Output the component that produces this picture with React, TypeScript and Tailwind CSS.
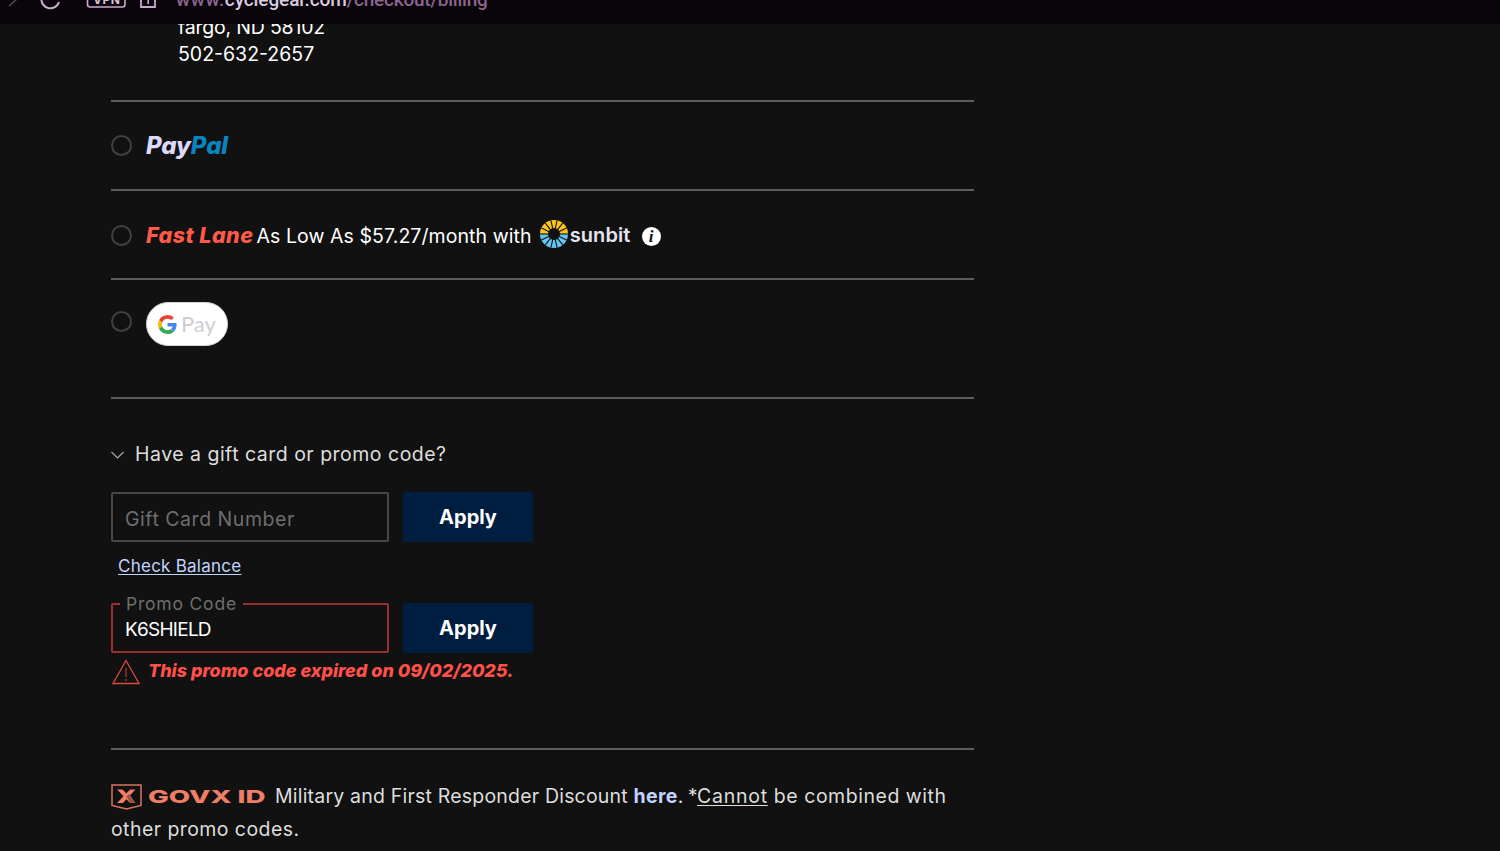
import type { ReactNode } from 'react';

function Radio() {
  return <span className="block size-[21px] shrink-0 rounded-full border-2 border-[#414141]" />;
}

function ApplyButton() {
  return (
    <button className="h-[50px] w-[130px] rounded-[2px] bg-[#001e40] text-[20px] font-bold text-white">
      Apply
    </button>
  );
}

function PaymentRow({ className, children }: { className: string; children: ReactNode }) {
  return <div className={`flex border-b-2 border-[#5c5c5c] ${className}`}>{children}</div>;
}

function SunbitMark() {
  const rays = 14;
  return (
    <svg width="28" height="28" viewBox="0 0 28 28" className="shrink-0">
      <path d="M0 14a14 14 0 0 1 28 0z" fill="#fbc51b" />
      <path d="M0 14a14 14 0 0 0 28 0z" fill="#62c6f2" />
      {Array.from({ length: rays / 2 }, (_, i) => (
        <path
          key={i}
          d="M0 14H28"
          stroke="#111111"
          strokeWidth="1.100"
          transform={`rotate(${(i * 360) / rays} 14 14)`}
        />
      ))}
      <circle cx="14" cy="14" r="6" fill="#111111" />
    </svg>
  );
}

function GoogleG() {
  return (
    <svg width="19" height="19" viewBox="0 0 48 48" className="shrink-0">
      <path
        fill="#ea4335"
        d="M24 9.5c3.54 0 6.71 1.22 9.21 3.6l6.85-6.85C35.9 2.38 30.47 0 24 0 14.62 0 6.51 5.38 2.56 13.22l7.98 6.19C12.43 13.72 17.74 9.5 24 9.5z"
      />
      <path
        fill="#4285f4"
        d="M46.98 24.55c0-1.57-.15-3.09-.38-4.55H24v9.02h12.94c-.58 2.96-2.26 5.48-4.78 7.18l7.73 6c4.51-4.18 7.09-10.36 7.09-17.65z"
      />
      <path
        fill="#fbbc05"
        d="M10.53 28.59c-.48-1.45-.76-2.99-.76-4.59s.27-3.14.76-4.59l-7.98-6.19C.92 16.46 0 20.12 0 24s.92 7.54 2.56 10.78l7.97-6.19z"
      />
      <path
        fill="#34a853"
        d="M24 48c6.48 0 11.93-2.13 15.89-5.81l-7.73-6c-2.15 1.45-4.92 2.3-8.16 2.3-6.26 0-11.57-4.22-13.47-9.91l-7.98 6.19C6.51 42.62 14.62 48 24 48z"
      />
    </svg>
  );
}

function GovxShield() {
  return (
    <svg width="31" height="26" viewBox="0 0 31 26" className="shrink-0">
      <path d="M1 1h29v20.500l-14.500 3.500L1 21.500z" fill="none" stroke="#d9755f" strokeWidth="1.500" />
      <path d="M6 5.500h5.500l13 13.500H19z" fill="#ee7f66" />
      <path d="M19 5.500h5.500L12 19H6z" fill="#ee7f66" />
      <path d="M15.500 12.500l3-2.500 6 9H19z" fill="#9c5346" />
    </svg>
  );
}

function BrowserBar() {
  return (
    <header className="h-6 overflow-hidden bg-[#09050b]">
      <div className="-mt-3 flex h-6 items-center">
        <svg width="176" height="24" viewBox="0 0 176 24" fill="none" className="shrink-0">
          <path d="M10 5l7 6-8 7" stroke="#54465a" strokeWidth="1.500" />
          <path d="M41.500 10a9 9 0 0 0 17.500 4" stroke="#c9b3cd" strokeWidth="2" />
          <rect x="87.500" y="1" width="37.500" height="18" rx="2.500" stroke="#c9a9cf" strokeWidth="1.600" />
          <text
            x="93"
            y="15.500"
            fill="#d9c0de"
            fontFamily="Inter, sans-serif"
            fontSize="12"
            fontWeight="700"
            textLength="27"
          >
            VPN
          </text>
          <path d="M141 8.500h14v10.500h-14z" stroke="#c9a9cf" strokeWidth="1.800" />
          <path d="M148.200 9v7" stroke="#c9a9cf" strokeWidth="1.600" />
        </svg>
        <p className="font-[Roboto] text-[19px] leading-6 font-medium whitespace-nowrap text-[#8d648f]">
          <span className="tracking-[0.600px]">www.</span>
          <span className="tracking-[-0.100px] text-[#dccbe0]">cyclegear.com</span>
          <span className="tracking-[-0.200px]">/checkout/billing</span>
        </p>
      </div>
    </header>
  );
}

export default function App() {
  return (
    <div className="h-[851px] w-[1500px] overflow-hidden bg-[#111111] font-[Inter,sans-serif] text-[19.5px] text-white">
      <BrowserBar />

      <main className="ml-[111px] w-[863px]">
        <div className="h-[78px] overflow-hidden border-b-2 border-[#5c5c5c] pl-[67px]">
          <div className="-mt-[10px] leading-[27px]">
            <p className="tracking-[-0.200px]">fargo, ND 58102</p>
            <p>502-632-2657</p>
          </div>
        </div>

        <PaymentRow className="h-[89px] items-center gap-[14px]">
          <Radio />
          <span className="text-[24px] font-extrabold tracking-[-0.100px] italic">
            <span className="text-[#dcd9fb]">Pay</span>
            <span className="text-[#0a85c2]">Pal</span>
          </span>
        </PaymentRow>

        <PaymentRow className="h-[89px] items-center pt-px whitespace-nowrap">
          <Radio />
          <span className="ml-[14px] text-[21.5px] font-extrabold tracking-[0.450px] text-[#ff5a4a] italic">
            Fast Lane
          </span>
          <span className="ml-[3px] pt-[3px] tracking-[0.080px]">As Low As $57.27/month with</span>
          <span className="ml-2 flex -translate-y-px items-center">
            <SunbitMark />
            <span className="ml-[2px] pt-[2px] text-[20px] font-semibold tracking-[0.100px] text-[#e6e4f4]">
              sunbit
            </span>
          </span>
          <span className="ml-[11px] flex size-[19px] translate-y-px items-center justify-center rounded-full bg-white font-['Liberation_Serif',serif] text-[17px] leading-none font-bold text-[#111111] italic">
            i
          </span>
        </PaymentRow>

        <PaymentRow className="h-[119px] items-start gap-[14px] pt-[22px]">
          <div className="pt-[9px]">
            <Radio />
          </div>
          <div className="flex h-11 w-[82px] items-center gap-[4px] rounded-full border border-[#d5d5d5] bg-white pl-[11px]">
            <GoogleG />
            <span className="font-[Lato] text-[22px] leading-6 text-[#cdced3]">Pay</span>
          </div>
        </PaymentRow>

        <div className="flex h-[93px] items-center gap-[11px] pt-[18px] text-[#dedede]">
          <svg width="13" height="8" viewBox="0 0 13 8" fill="none">
            <path d="M.5 1l6 6 6-6" stroke="#a8a8a8" strokeWidth="1.200" />
          </svg>
          <span className="tracking-[0.490px]">Have a gift card or promo code?</span>
        </div>

        <div className="flex gap-[14px]">
          <div className="flex h-[50px] w-[278px] items-center rounded-[2px] border-2 border-[#484848] pt-[6px] pl-[12px] text-[#6e6e6e]">
            <span className="tracking-[0.530px]">Gift Card Number</span>
          </div>
          <ApplyButton />
        </div>

        <a className="mt-3 ml-[7px] block h-6 w-fit text-[17px] leading-6 tracking-[0.250px] text-[#c3d3ff] underline underline-offset-2">
          Check Balance
        </a>

        <div className="mt-[25px] flex gap-[14px]">
          <div className="relative flex h-[50px] w-[278px] items-center rounded-[2px] border-2 border-[#99302f] pt-[5px] pl-3">
            <span className="text-[19px] tracking-[-0.750px]">K6SHIELD</span>
            <span className="absolute -top-[13px] left-[7px] bg-[#111111] px-[6px] text-[17.5px] leading-6 tracking-[0.800px] text-[#6e6e6e]">
              Promo Code
            </span>
          </div>
          <ApplyButton />
        </div>

        <div className="flex h-[97px] items-start gap-[8px] border-b-2 border-[#5c5c5c] pt-[6px] pl-px whitespace-nowrap">
          <svg width="28" height="26" viewBox="0 0 28 26" fill="none">
            <path d="M14 1.500L27 24.500H1z" stroke="#d94a3f" strokeWidth="1.300" />
            <path d="M14 9v9M14 20v2" stroke="#b03c35" strokeWidth="1.300" />
          </svg>
          <span className="text-[18px] leading-6 font-extrabold text-[#ff5149] italic">
            This promo code expired on 09/02/2025.
          </span>
        </div>

        <div className="pt-[30px] leading-[33px] text-[#dedede]">
          <div className="flex items-center whitespace-nowrap">
            <GovxShield />
            <span className="ml-[6px] w-[127px] shrink-0">
              <span className="block w-fit origin-left scale-x-[1.540] text-[18px] font-extrabold text-[#ee7f66]">
                GOVX ID
              </span>
            </span>
            <p>
              <span className="tracking-[0.200px]">Military and First Responder Discount </span>
              <span className="font-bold tracking-[0.300px] text-[#c3d3ff]">here</span>
              <span className="tracking-[-0.500px]">. *</span>
              <span className="tracking-[0.750px] underline underline-offset-2">Cannot</span>
              <span className="tracking-[0.530px]"> be combined with</span>
            </p>
          </div>
          <p className="tracking-[0.430px]">other promo codes.</p>
        </div>
      </main>
    </div>
  );
}
